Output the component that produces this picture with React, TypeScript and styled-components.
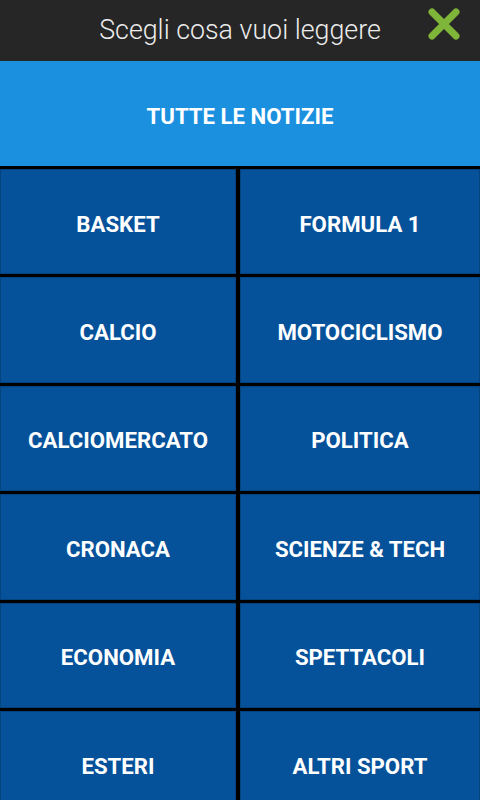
import styled, { createGlobalStyle } from 'styled-components';

const GlobalStyle = createGlobalStyle`
  html, body {
    margin: 0;
    padding: 0;
    background: #000;
    overflow: hidden;
  }
  * {
    box-sizing: border-box;
  }
`;

const Screen = styled.div`
  width: 480px;
  height: 800px;
  overflow: hidden;
  display: flex;
  flex-direction: column;
  background: #000;
  font-family: Roboto, 'Liberation Sans', sans-serif;
`;

const Header = styled.header`
  position: relative;
  height: 61px;
  flex-shrink: 0;
  display: flex;
  align-items: center;
  justify-content: center;
  background: #262626;
`;

const Title = styled.h1`
  margin: 0;
  padding-bottom: 2px;
  font-size: 26.8px;
  font-weight: 300;
  color: #ececec;
`;

const CloseButton = styled.button`
  position: absolute;
  right: 19px;
  top: 8px;
  width: 34px;
  height: 32px;
  padding: 0;
  border: none;
  background: none;
  display: flex;
  align-items: center;
  justify-content: center;
`;

const AllNews = styled.div`
  height: 105px;
  flex-shrink: 0;
  display: flex;
  align-items: center;
  justify-content: center;
  background: #1a90df;
  color: #fff;
  font-size: 22.2px;
  font-weight: 700;
  padding-top: 4px;
  margin-bottom: 3px;
`;

const Grid = styled.div`
  display: grid;
  grid-template-columns: 236px 240px;
  grid-auto-rows: 105.4px;
  column-gap: 4px;
  row-gap: 3px;
`;

const Tile = styled.div`
  display: flex;
  align-items: center;
  justify-content: center;
  background: #05529b;
  border: 1px solid #03447f;
  color: #fff;
  font-size: 22.2px;
  font-weight: 700;
  padding-top: 4px;
`;

const categories = [
  'BASKET',
  'FORMULA 1',
  'CALCIO',
  'MOTOCICLISMO',
  'CALCIOMERCATO',
  'POLITICA',
  'CRONACA',
  'SCIENZE & TECH',
  'ECONOMIA',
  'SPETTACOLI',
  'ESTERI',
  'ALTRI SPORT',
];

export default function App() {
  return (
    <>
      <GlobalStyle />
      <Screen>
        <Header>
          <Title>Scegli cosa vuoi leggere</Title>
          <CloseButton aria-label="Chiudi">
            <svg width="34" height="32" viewBox="0 0 34 32">
              <path
                d="M5 4 L29 28 M29 4 L5 28"
                stroke="#7fb539"
                strokeWidth="7"
                strokeLinecap="round"
              />
            </svg>
          </CloseButton>
        </Header>
        <AllNews>TUTTE LE NOTIZIE</AllNews>
        <Grid>
          {categories.map((c) => (
            <Tile key={c}>{c}</Tile>
          ))}
        </Grid>
      </Screen>
    </>
  );
}
